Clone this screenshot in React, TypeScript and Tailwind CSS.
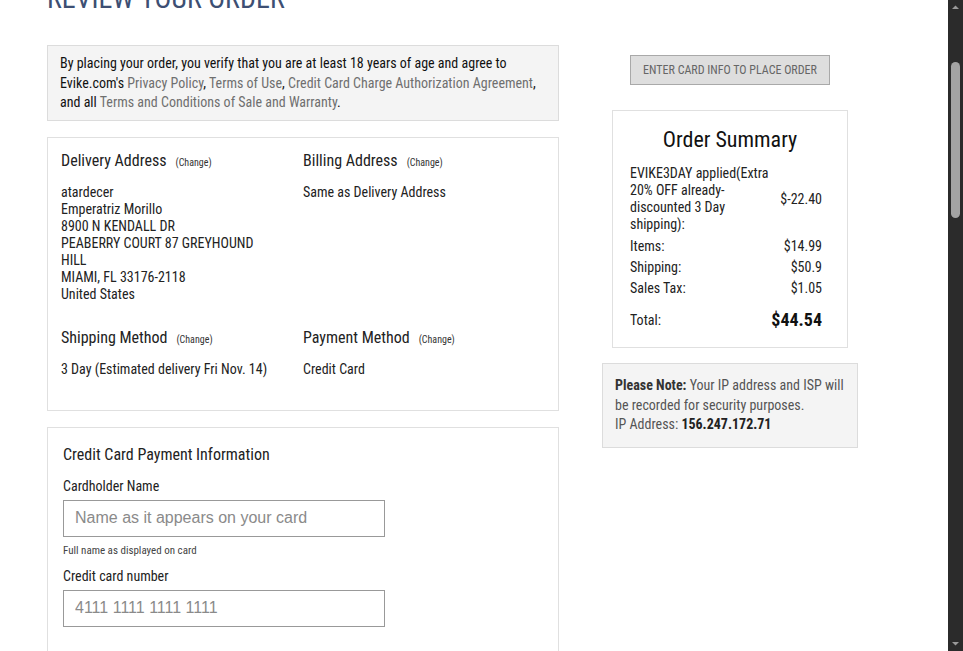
const font = { fontFamily: '"Roboto Condensed", Roboto, "Liberation Sans", sans-serif', fontStretch: 'condensed' } as const;

function Change() {
  return <span className="ml-[9px] text-[10px] leading-none text-[#333]">(Change)</span>;
}

function Section({ title, children }: { title: string; children: React.ReactNode }) {
  return (
    <div>
      <h3 className="text-[16px] leading-[20px] text-[#222]">
        {title}
        <Change />
      </h3>
      <div className="mt-[13px] text-[14px] leading-[17px] text-[#222]">{children}</div>
    </div>
  );
}

function Field({ label, placeholder, help, className }: { label: string; placeholder: string; help?: string; className: string }) {
  return (
    <div className={className}>
      <label className="block text-[14px] leading-[17px] text-[#222]">{label}</label>
      <input
        placeholder={placeholder}
        className="mt-[5px] block h-[37px] w-[322px] border border-[#999] bg-white px-[11px] text-[16px] text-[#333] outline-none placeholder:text-[#8a8a8a]"
        style={{ fontFamily: '"Liberation Sans", Arial, sans-serif' }}
      />
      {help && <p className="mt-[7px] text-[11px] leading-[13px] text-[#444]">{help}</p>}
    </div>
  );
}

export default function App() {
  return (
    <div className="flex h-[651px] overflow-hidden bg-white" style={font}>
      <div className="flex-1 pl-[47px]">
        <h1 className="mt-[-15px] text-[28px] leading-[28px] text-[#3d4f73] uppercase">Review Your Order</h1>

        <div className="mt-[32px] flex gap-[43px]">
          {/* Left column: terms, addresses, card form */}
          <div className="w-[512px]">
            <div className="border border-[#dcdcdc] bg-[#f4f4f4] px-[12px] pt-[8px] pb-[7px] text-[14px] leading-[19.5px] text-[#111]">
              By placing your order, you verify that you are at least 18 years of age and agree to Evike.com's{' '}
              <a className="text-[#6f6f6f]">Privacy Policy</a>, <a className="text-[#6f6f6f]">Terms of Use</a>,{' '}
              <a className="text-[#6f6f6f]">Credit Card Charge Authorization Agreement</a>, and all{' '}
              <a className="text-[#6f6f6f]">Terms and Conditions of Sale and Warranty</a>.
            </div>

            <div className="mt-[16px] border border-[#e0e0e0] px-[13px] pt-[13px] pb-[32px]">
              <div className="grid grid-cols-2">
                <Section title="Delivery Address">
                  <div className="w-[205px]">
                    atardecer
                    <br />
                    Emperatriz Morillo
                    <br />
                    8900 N KENDALL DR
                    <br />
                    PEABERRY COURT 87 GREYHOUND HILL
                    <br />
                    MIAMI, FL 33176-2118
                    <br />
                    United States
                  </div>
                </Section>
                <Section title="Billing Address">Same as Delivery Address</Section>
              </div>
              <div className="mt-[25px] grid grid-cols-2">
                <Section title="Shipping Method">3 Day (Estimated delivery Fri Nov. 14)</Section>
                <Section title="Payment Method">Credit Card</Section>
              </div>
            </div>

            <div className="mt-[16px] h-[260px] border border-[#e0e0e0] px-[15px] pt-[17px]">
              <h3 className="text-[16px] leading-[20px] text-[#222]">Credit Card Payment Information</h3>
              <Field className="mt-[13px]" label="Cardholder Name" placeholder="Name as it appears on your card" help="Full name as displayed on card" />
              <Field className="mt-[11px]" label="Credit card number" placeholder="4111 1111 1111 1111" />
            </div>
          </div>

          {/* Right column: place order + summary */}
          <div className="flex w-[256px] flex-col items-center">
            <button className="mt-[10px] h-[30px] w-[200px] border border-[#a9a9a9] bg-[#dedede] text-[12px] text-[#666] uppercase">
              Enter card info to place order
            </button>

            <div className="mt-[25px] w-[236px] border border-[#e0e0e0] pt-[14px] pr-[25px] pb-[16px] pl-[17px] text-[14px] leading-[17px] text-[#222]">
              <h2 className="pl-[8px] text-center text-[22px] leading-[30px] text-[#111]">Order Summary</h2>
              <div className="mt-[10px] flex items-center justify-between">
                <span className="w-[142px]">EVIKE3DAY applied(Extra 20% OFF already-discounted 3 Day shipping):</span>
                <span>$-22.40</span>
              </div>
              <div className="mt-[5px] flex justify-between">
                <span>Items:</span>
                <span>$14.99</span>
              </div>
              <div className="mt-[4px] flex justify-between">
                <span>Shipping:</span>
                <span>$50.9</span>
              </div>
              <div className="mt-[4px] flex justify-between">
                <span>Sales Tax:</span>
                <span>$1.05</span>
              </div>
              <div className="mt-[12px] flex items-center justify-between">
                <span>Total:</span>
                <span className="text-[18px] leading-[22px] font-bold text-[#111]">$44.54</span>
              </div>
            </div>

            <div className="mt-[15px] w-[256px] border border-[#dcdcdc] bg-[#f4f4f4] px-[12px] pt-[12px] pb-[12px] text-[14px] leading-[19.5px] text-[#555]">
              <b className="font-bold text-[#333]">Please Note:</b> Your IP address and ISP will be recorded for security purposes.
              <br />
              IP Address: <b className="font-bold text-[#222]">156.247.172.71</b>
            </div>
          </div>
        </div>
      </div>

      {/* Window scrollbar */}
      <div className="flex w-[15px] flex-col items-center bg-[#2b2b2b]">
        <svg width="15" height="15" viewBox="0 0 15 15" className="shrink-0">
          <path d="M4 9 L7.5 5.5 L11 9 Z" fill="#9a9a9a" />
        </svg>
        <div className="mt-[47px] h-[156px] w-[9px] rounded-full bg-[#a3a3a3]" />
        <div className="flex-1" />
        <svg width="15" height="15" viewBox="0 0 15 15" className="shrink-0">
          <path d="M4 6 L7.5 9.5 L11 6 Z" fill="#9a9a9a" />
        </svg>
      </div>
    </div>
  );
}
